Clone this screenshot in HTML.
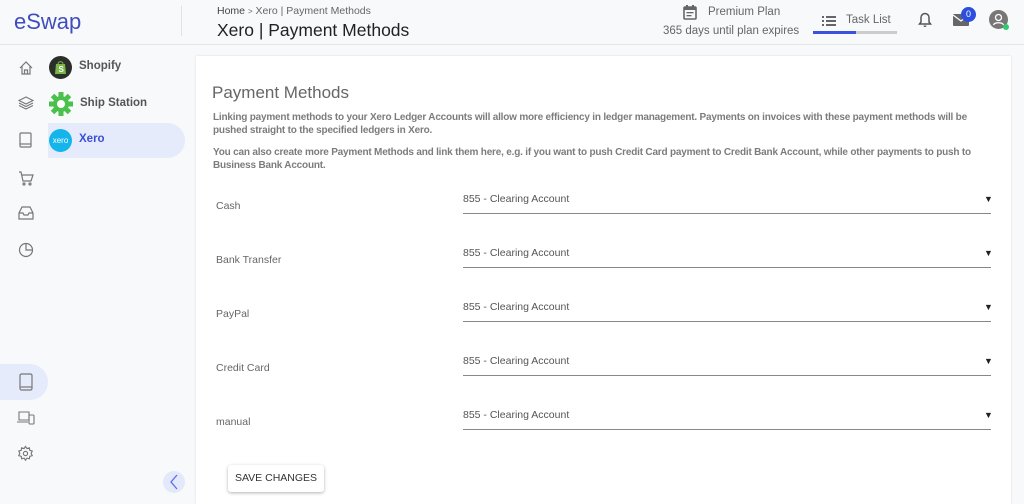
<!DOCTYPE html>
<html><head><style>
*{margin:0;padding:0;box-sizing:border-box}
html{width:1024px;height:504px;overflow:hidden}
body{width:1024px;height:504px;overflow:hidden;background:#f8f9fa;font-family:"Liberation Sans",sans-serif;color:#555;position:relative}
.hdr{position:absolute;left:0;top:0;width:1024px;height:45px;background:#f8f9fa;border-bottom:1px solid #e4e5e7}
.abs{position:absolute;white-space:nowrap}
.card{position:absolute;left:196px;top:56px;width:815px;height:448px;background:#fff;box-shadow:0 0 2px rgba(0,0,0,.12)}
.p{font-size:10px;color:#666;letter-spacing:-0.2px;line-height:13px;font-weight:bold;opacity:.85}
.lbl{font-size:10.5px;color:#666}
.sel{position:absolute;left:463px;width:528px;height:1px;background:#888}
.st{font-size:10.5px;color:#555}
.ar{font-size:9px;color:#222}
</style></head><body>
<div class="hdr"></div>
<div class="abs" style="left:14px;top:9px;font-size:22px;color:#3f4dbf">eSwap</div>
<div class="abs" style="left:181px;top:6px;width:1px;height:30px;background:#e2e2e2"></div>
<div class="abs" style="left:217px;top:5px;font-size:10.5px;color:#666"><span style="color:#444">Home</span> <span style="font-size:8px">&gt;</span> Xero | Payment Methods</div>
<div class="abs" style="left:217px;top:20px;font-size:17.5px;color:#222">Xero | Payment Methods</div>
<svg class="abs" style="left:683px;top:5px" width="14" height="15" viewBox="0 0 14 15"><rect x="1" y="2" width="12" height="12" rx="1" fill="none" stroke="#666" stroke-width="1.6"/><rect x="1" y="2" width="12" height="3" fill="#666"/><rect x="3" y="0" width="2" height="3" fill="#666"/><rect x="9" y="0" width="2" height="3" fill="#666"/><rect x="3.5" y="7" width="7" height="1.3" fill="#666"/><rect x="3.5" y="10" width="5" height="1.3" fill="#666"/></svg>
<div class="abs" style="left:708px;top:6px;font-size:11.5px;color:#666">Premium Plan</div>
<div class="abs" style="left:663px;top:25px;font-size:11.5px;color:#666">365 days until plan expires</div>
<svg class="abs" style="left:822px;top:16px" width="14" height="10"><g fill="#666"><rect x="0" y="0" width="2" height="2"/><rect x="0" y="4" width="2" height="2"/><rect x="0" y="8" width="2" height="2"/><rect x="4" y="0" width="10" height="2"/><rect x="4" y="4" width="10" height="2"/><rect x="4" y="8" width="10" height="2"/></g></svg>
<div class="abs" style="left:846px;top:14px;font-size:11.5px;color:#666">Task List</div>
<div class="abs" style="left:813px;top:31px;width:84px;height:3px;background:#ccc"></div>
<div class="abs" style="left:813px;top:31px;width:43px;height:3px;background:#3953e0"></div>
<svg class="abs" style="left:918px;top:12px" width="14" height="16" viewBox="0 0 14 16"><path d="M7 1.5a4 4 0 0 0-4 4V10l-1.5 2h11L11 10V5.5a4 4 0 0 0-4-4z" fill="none" stroke="#555" stroke-width="1.5"/><path d="M5.5 13.5a1.5 1.5 0 0 0 3 0z" fill="#555"/></svg>
<svg class="abs" style="left:953px;top:14px" width="16" height="12"><rect width="16" height="12" rx="1" fill="#666"/><path d="M0 1l8 6 8-6" stroke="#fff" stroke-width="1.2" fill="none"/></svg>
<div class="abs" style="left:961px;top:7px;width:15px;height:15px;border-radius:50%;background:#2c4fe0;color:#fff;font-size:9px;text-align:center;line-height:15px">0</div>
<div class="abs" style="left:989px;top:10px;width:19px;height:19px;border-radius:50%;background:#777"></div>
<svg class="abs" style="left:989px;top:10px" width="19" height="19"><circle cx="9.5" cy="7.5" r="3" fill="none" stroke="#fff" stroke-width="1.3"/><path d="M4.5 15c1-3 9-3 10 0" fill="none" stroke="#fff" stroke-width="1.3"/></svg>
<div class="abs" style="left:1003px;top:24px;width:6px;height:6px;border-radius:50%;background:#2ecc71"></div>

<svg class="abs" style="left:18px;top:60px" width="16" height="16" viewBox="0 0 16 16" fill="none" stroke="#777" stroke-width="1.2"><path d="M2 8L8 2l6 6M4 6.5V14h8V6.5M6.5 14v-4h3v4"/></svg>
<svg class="abs" style="left:18px;top:96px" width="16" height="14" viewBox="0 0 16 14" fill="none" stroke="#777" stroke-width="1.1"><path d="M8 1l7 3.5-7 3.5-7-3.5z M1 7l7 3.5 7-3.5 M1 9.5l7 3.5 7-3.5"/></svg>
<svg class="abs" style="left:19px;top:132px" width="14" height="16" fill="none" stroke="#777" stroke-width="1.2"><rect x="1" y="1" width="11" height="14" rx="1"/><path d="M1 12h11"/></svg>
<svg class="abs" style="left:18px;top:170px" width="16" height="16" fill="none" stroke="#777" stroke-width="1.2"><path d="M1 2h2l2 9h8l2-6H4"/><circle cx="6" cy="14" r="1"/><circle cx="12" cy="14" r="1"/></svg>
<svg class="abs" style="left:18px;top:206px" width="16" height="14" fill="none" stroke="#777" stroke-width="1.2"><path d="M1 7l3-6h8l3 6v6H1z M1 7h4l1 2h4l1-2h4"/></svg>
<svg class="abs" style="left:18px;top:242px" width="16" height="16" fill="none" stroke="#777" stroke-width="1.2"><circle cx="8" cy="8" r="6.5"/><path d="M8 1.5V8h6.5"/></svg>
<div class="abs" style="left:0;top:364px;width:48px;height:36px;border-radius:0 18px 18px 0;background:#e6ebfb"></div>
<svg class="abs" style="left:19px;top:373px" width="14" height="18" fill="none" stroke="#777" stroke-width="1.2"><rect x="1" y="1" width="12" height="16" rx="1.5"/><path d="M1 14h12"/></svg>
<svg class="abs" style="left:17px;top:411px" width="18" height="14" fill="none" stroke="#777" stroke-width="1.1"><path d="M2 1h10v8H2z M0 11h11"/><rect x="12" y="4" width="5" height="9" rx="1"/></svg>
<svg class="abs" style="left:17px;top:445px" width="17" height="17" viewBox="0 0 24 24" fill="none" stroke="#777" stroke-width="1.6"><circle cx="12" cy="12" r="3"/><path d="M12 2l2 3 3.5-1 .5 3.5 3.5 1-1.5 3.5 1.5 3-3.5 1-.5 3.5-3.5-1-2 3-2-3-3.5 1-.5-3.5-3.5-1 1.5-3-1.5-3.5 3.5-1 .5-3.5 3.5 1z"/></svg>
<div class="abs" style="left:163px;top:471px;width:22px;height:22px;border-radius:50%;background:#e3e8fb"></div>
<svg class="abs" style="left:169px;top:474px" width="10" height="16"><path d="M8 1L2 8l6 7" stroke="#5a6fe0" stroke-width="1.3" fill="none"/></svg>

<div class="abs" style="left:48px;top:123px;width:137px;height:35px;border-radius:0 18px 18px 0;background:#e6ebfb"></div>
<div class="abs" style="left:49px;top:56px;width:23px;height:23px;border-radius:50%;background:#2b2f2c"></div>
<svg class="abs" style="left:54px;top:60px" width="13" height="15"><path d="M2 4h9l1 10H1z" fill="#7ab648"/><path d="M4 4c0-3 5-3 5 0" stroke="#7ab648" fill="none"/><text x="4.5" y="12" font-size="8" fill="#fff" font-family="Liberation Sans" font-weight="bold">S</text></svg>
<div class="abs" style="left:79px;top:60px;font-size:11.5px;color:#555;font-weight:bold">Shopify</div>
<svg class="abs" style="left:49px;top:92px" width="24" height="24" viewBox="0 0 24 24"><circle cx="12" cy="12" r="8" fill="#4ac14a"/><g fill="#4ac14a"><rect x="9.5" y="0" width="5" height="24"/><rect x="0" y="9.5" width="24" height="5"/><rect x="9.5" y="0" width="5" height="24" transform="rotate(45 12 12)"/><rect x="9.5" y="0" width="5" height="24" transform="rotate(-45 12 12)"/></g><circle cx="12" cy="12" r="4" fill="#fff"/></svg>
<div class="abs" style="left:80px;top:97px;font-size:11.5px;color:#555;font-weight:bold">Ship Station</div>
<div class="abs" style="left:49px;top:129px;width:23px;height:23px;border-radius:50%;background:#13b5ea;color:#fff;font-size:8px;text-align:center;line-height:23px">xero</div>
<div class="abs" style="left:79px;top:133px;font-size:11.5px;color:#3b4fd6;font-weight:bold">Xero</div>

<div class="card"></div>
<div class="abs" style="left:212px;top:83px;font-size:17px;color:#666">Payment Methods</div>
<div class="abs p" style="left:213px;top:111px">Linking payment methods to your Xero Ledger Accounts will allow more efficiency in ledger management. Payments on invoices with these payment methods will be<br>pushed straight to the specified ledgers in Xero.</div>
<div class="abs p" style="left:213px;top:146px">You can also create more Payment Methods and link them here, e.g. if you want to push Credit Card payment to Credit Bank Account, while other payments to push to<br>Business Bank Account.</div>

<div class="abs lbl" style="left:216px;top:200px">Cash</div>
<div class="abs st" style="left:463px;top:193px">855 - Clearing Account</div><div class="abs ar" style="left:984px;top:194px">▼</div><div class="sel" style="top:213px"></div>
<div class="abs lbl" style="left:216px;top:254px">Bank Transfer</div>
<div class="abs st" style="left:463px;top:247px">855 - Clearing Account</div><div class="abs ar" style="left:984px;top:248px">▼</div><div class="sel" style="top:267px"></div>
<div class="abs lbl" style="left:216px;top:308px">PayPal</div>
<div class="abs st" style="left:463px;top:301px">855 - Clearing Account</div><div class="abs ar" style="left:984px;top:302px">▼</div><div class="sel" style="top:321px"></div>
<div class="abs lbl" style="left:216px;top:362px">Credit Card</div>
<div class="abs st" style="left:463px;top:355px">855 - Clearing Account</div><div class="abs ar" style="left:984px;top:356px">▼</div><div class="sel" style="top:375px"></div>
<div class="abs lbl" style="left:216px;top:416px">manual</div>
<div class="abs st" style="left:463px;top:409px">855 - Clearing Account</div><div class="abs ar" style="left:984px;top:410px">▼</div><div class="sel" style="top:429px"></div>

<div class="abs" style="left:228px;top:465px;width:96px;height:27px;background:#fff;border-radius:3px;box-shadow:0 1px 3px rgba(0,0,0,.3);font-size:10.5px;color:#333;text-align:center;line-height:27px">SAVE CHANGES</div>
</body></html>
